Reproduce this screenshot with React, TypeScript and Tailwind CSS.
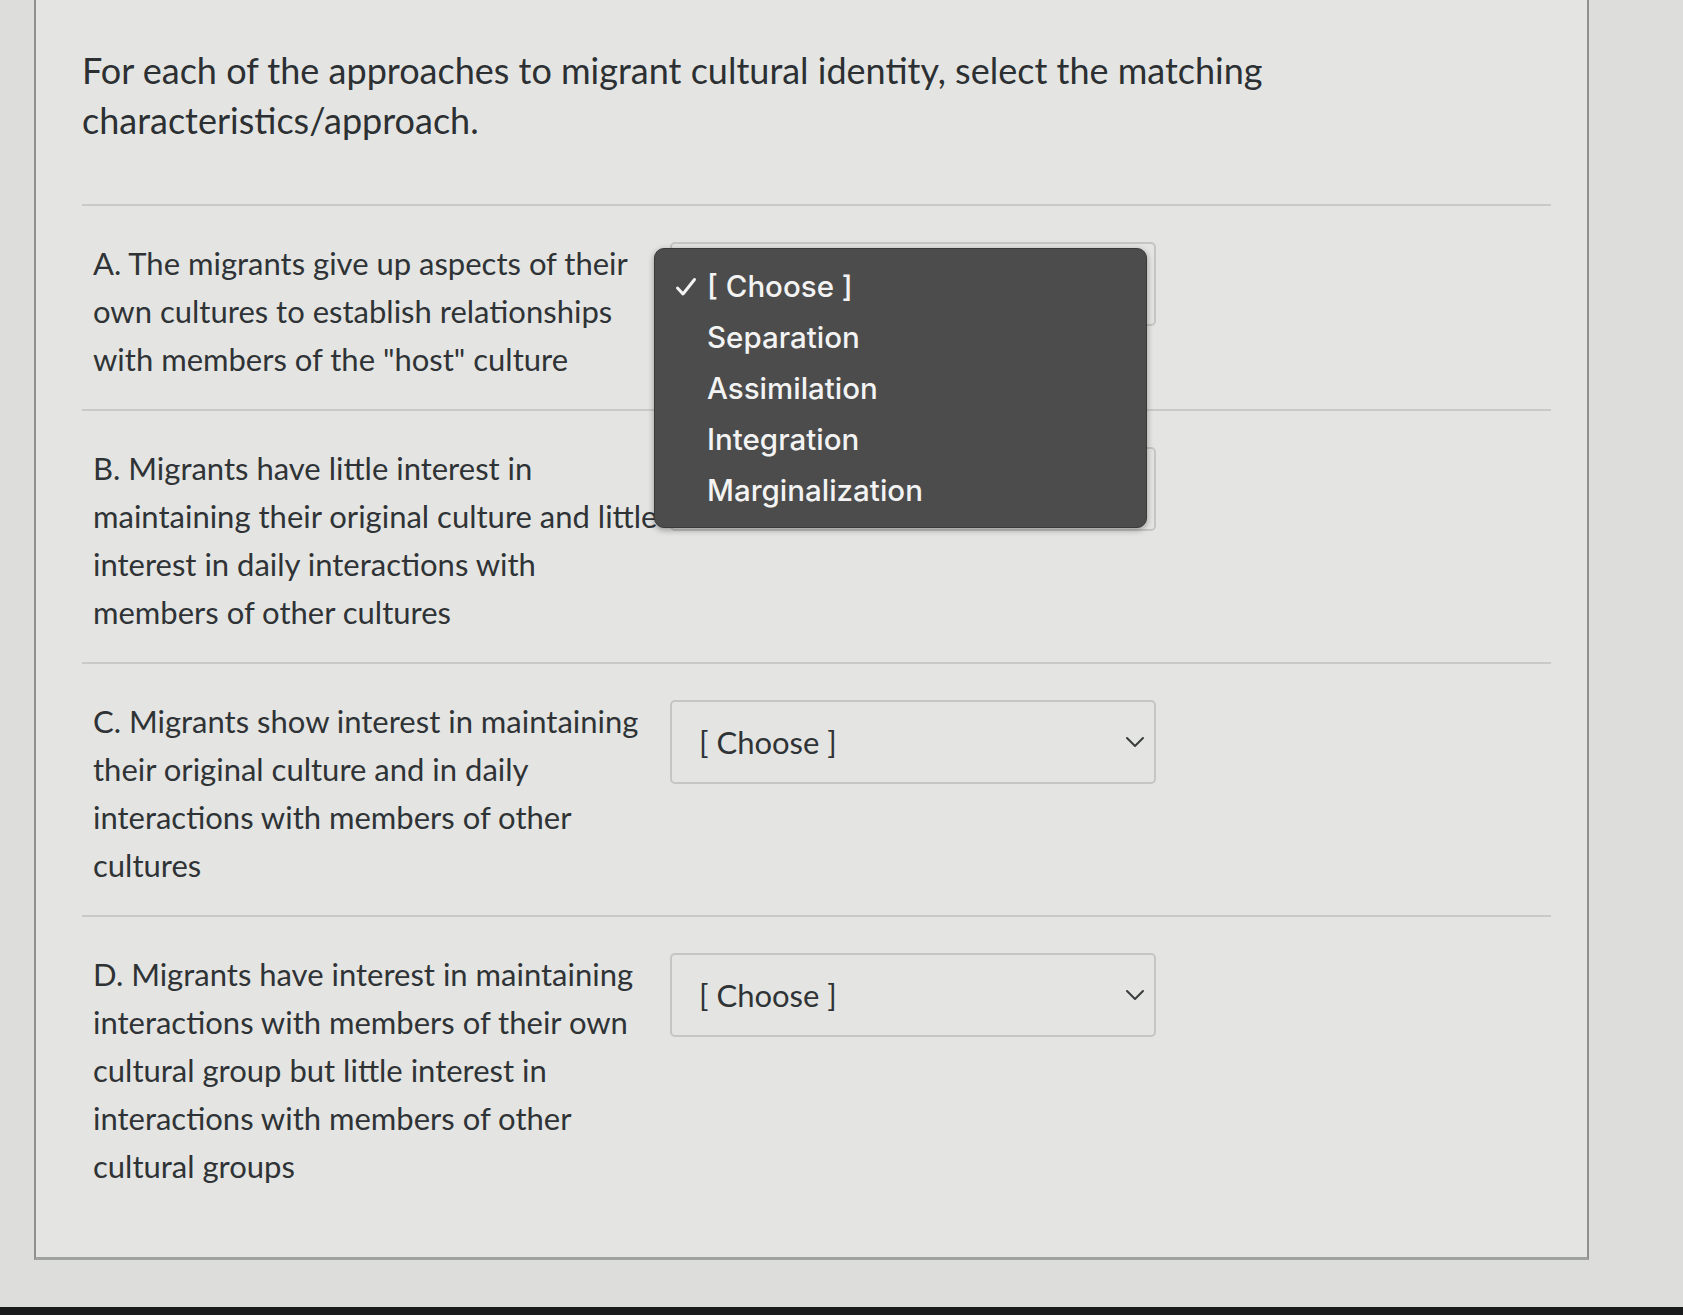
import React from "react";

const rows = [
  {
    text: 'A. The migrants give up aspects of their own cultures to establish relationships with members of the "host" culture',
  },
  {
    text: "B. Migrants have little interest in maintaining their original culture and little interest in daily interactions with members of other cultures",
  },
  {
    text: "C. Migrants show interest in maintaining their original culture and in daily interactions with members of other cultures",
  },
  {
    text: "D. Migrants have interest in maintaining interactions with members of their own cultural group but little interest in interactions with members of other cultural groups",
  },
];

function Chevron() {
  return (
    <svg width="20" height="12" viewBox="0 0 20 12" fill="none">
      <path d="M2 2 L10 10 L18 2" stroke="#3a3c3e" strokeWidth="2" strokeLinecap="round" strokeLinejoin="round" />
    </svg>
  );
}

function Select({ hidden }: { hidden: boolean }) {
  return (
    <div className="w-[486px] h-[84px] shrink-0 border-2 border-[#c4c6c3] rounded-[5px] flex items-center justify-between pl-[27px] pr-[9px] text-[31px] text-[#2f3336] bg-[#e4e5e2]">
      <span className={hidden ? "invisible" : ""}>[ Choose ]</span>
      <Chevron />
    </div>
  );
}

export default function App() {
  const options = ["[ Choose ]", "Separation", "Assimilation", "Integration", "Marginalization"];
  return (
    <div
      className="relative w-full h-[1315px] overflow-hidden bg-[#dddedb]"
      style={{ fontFamily: "Lato, 'Open Sans', sans-serif" }}
    >
      <div className="ml-[34px] w-[1555px] h-[1260px] border-l-2 border-r-2 border-b-[3px] border-l-[#8e908f] border-r-[#8e908f] border-b-[#a0a2a0] bg-[#e4e5e2] pl-[46px] pr-[36px]">
        <h1 className="pt-[45px] text-[36px] leading-[50px] text-[#2c3033] font-normal">
          For each of the approaches to migrant cultural identity, select the matching characteristics/approach.
        </h1>
        <div className="mt-[59px]">
          {rows.map((r, i) => (
            <div key={i} className="border-t-2 border-[#c9cac7] flex items-start pt-[33px] pb-[26px]">
              <div className="w-[588px] shrink-0 pl-[11px]">
                <p className="w-[569px] text-[31px] leading-[48px] text-[#2f3336]">{r.text}</p>
              </div>
              <div className="pt-[3px]">
                <Select hidden={i < 2} />
              </div>
            </div>
          ))}
        </div>
      </div>
      <div className="absolute left-0 right-0 bottom-0 h-[8px] bg-[#1a1b1c]" />

      <div
        className="absolute left-[654px] top-[248px] w-[493px] h-[280px] rounded-[10px] bg-[#4b4c4b] border border-[#393a3a] shadow-[0_2px_6px_rgba(0,0,0,0.35)] pt-[12px]"
        style={{ fontFamily: "Inter, 'Noto Sans', sans-serif" }}
      >
        {options.map((o, i) => (
          <div key={o} className="relative h-[51px] flex items-center pl-[52px] text-[29.5px] font-medium text-[#f3f3f3]">
            {i === 0 && (
              <svg className="absolute left-[20px] top-[16px]" width="22" height="20" viewBox="0 0 22 20" fill="none">
                <path d="M2.5 11 L8 17 L19.5 2.5" stroke="#f3f3f3" strokeWidth="3" strokeLinecap="round" strokeLinejoin="round" />
              </svg>
            )}
            {o}
          </div>
        ))}
      </div>
    </div>
  );
}
